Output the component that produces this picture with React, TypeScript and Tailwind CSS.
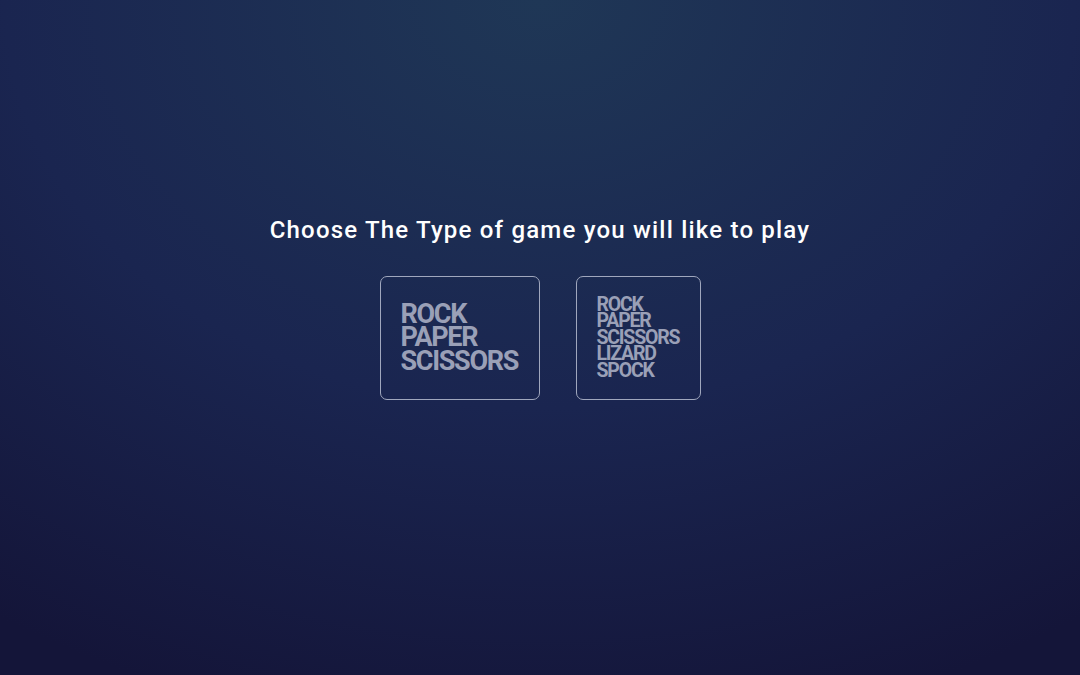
import React from 'react';

const modes = [
  { id: 'classic', lines: ['ROCK', 'PAPER', 'SCISSORS'], size: 'w-[160px] text-[27px] leading-[23.5px] tracking-[-1.3px]' },
  { id: 'spock', lines: ['ROCK', 'PAPER', 'SCISSORS', 'LIZARD', 'SPOCK'], size: 'w-[125px] text-[19.5px] leading-[16.5px] tracking-[-1.2px]' },
];

export default function App() {
  return (
    <div
      className="min-h-screen w-full flex flex-col items-center pt-[214px] bg-[radial-gradient(ellipse_90%_110%_at_50%_0%,#1f3756_0%,#1a2550_55%,#141539_100%)]"
      style={{ fontFamily: 'Roboto, "Liberation Sans", sans-serif' }}
    >
      <h1 className="text-white text-[24px] leading-[32px] font-medium tracking-[1.2px]">
        Choose The Type of game you will like to play
      </h1>

      {/* game type cards */}
      <div className="flex gap-[36px] mt-[30px]">
        {modes.map(m => (
          <button
            key={m.id}
            className={`${m.size} h-[124px] flex flex-col justify-center items-start px-[20px] border-[1.5px] border-[#a0a7bd] rounded-[7px] font-bold text-[#9aa0b7] cursor-pointer`}
          >
            {m.lines.map(l => (
              <span key={l} className="block">{l}</span>
            ))}
          </button>
        ))}
      </div>
    </div>
  );
}
